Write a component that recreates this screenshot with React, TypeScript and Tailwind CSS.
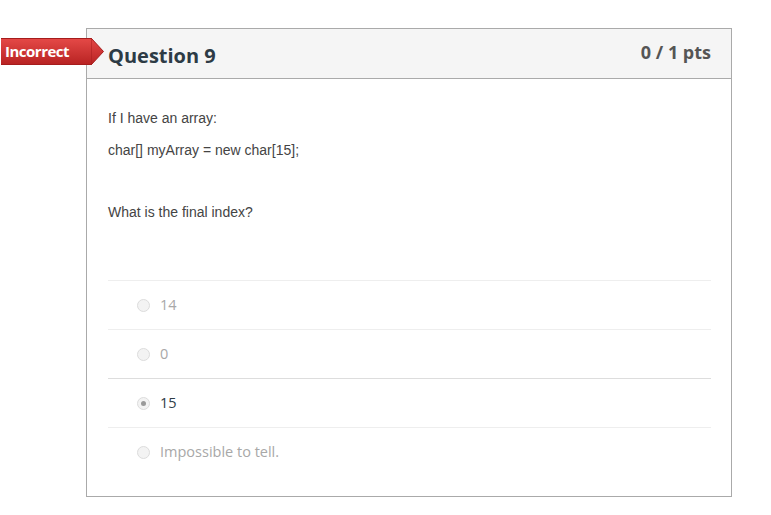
const answers = [
  { label: "14", selected: false },
  { label: "0", selected: false },
  { label: "15", selected: true },
  { label: "Impossible to tell.", selected: false },
];

function Radio({ checked }: { checked: boolean }) {
  return (
    <span className="flex h-[13px] w-[13px] items-center justify-center rounded-full border border-[#dcdcdc] bg-[#f3f3f3]">
      {checked ? <span className="h-[5px] w-[5px] rounded-full bg-[#9a9a9a]" /> : null}
    </span>
  );
}

function IncorrectBadge() {
  return (
    <div className="absolute left-[-86px] top-[9px] flex h-[27px] items-center">
      <div className="flex h-full w-[91px] items-center border-y border-[#a61c1c] bg-gradient-to-b from-[#e44846] to-[#b92323] pl-[4px] font-['Open_Sans',sans-serif] text-[15px] font-bold leading-none tracking-[-0.5px] text-white">
        Incorrect
      </div>
      <svg width="13" height="27" viewBox="0 0 13 27" aria-hidden="true" className="-ml-px">
        <defs>
          <linearGradient id="badge" x1="0" y1="0" x2="0" y2="1">
            <stop offset="0" stopColor="#e44846" />
            <stop offset="1" stopColor="#b92323" />
          </linearGradient>
        </defs>
        <path d="M0 0.5 L0.5 0.5 L12.5 13.5 L0.5 26.5 L0 26.5 Z" fill="url(#badge)" stroke="#a61c1c" strokeWidth="1" />
      </svg>
    </div>
  );
}

export default function App() {
  return (
    <div className="min-h-[515px] bg-white pt-[28px]">
      <div className="relative ml-[86px] w-[646px] border border-[#aaaaaa] bg-white">
        <IncorrectBadge />
        <header className="flex h-[50px] items-start justify-between border-b border-[#aaaaaa] bg-[#f5f5f5] pl-[21px] pr-[20px] font-['Open_Sans',sans-serif]">
          <h2 className="pt-[17px] text-[20px] font-bold leading-none text-[#2d3b45]">Question 9</h2>
          <span className="pt-[14px] text-[18px] font-bold leading-none text-[#555555]">0 / 1 pts</span>
        </header>

        <div className="pb-[20px] pl-[21px] pr-[20px] pt-[29px]">
          <div className="font-['Liberation_Sans',Arial,sans-serif] text-[14px] leading-[20px] text-[#444444]">
            <p>If I have an array:</p>
            <p className="mt-[12px]">char[] myArray = new char[15];</p>
            <p className="mt-[42px]">What is the final index?</p>
          </div>

          <div className="mt-[58px]">
            {answers.map((answer, i) => (
              <div
                key={answer.label}
                className={`flex h-[49px] items-center gap-[10px] border-t pl-[29px] font-['Open_Sans',sans-serif] text-[14.5px] ${
                  i === 2 ? "border-[#dddddd]" : "border-[#eeeeee]"
                }`}
              >
                <Radio checked={answer.selected} />
                <span className={answer.selected ? "text-[#2d3b45]" : "text-[#a8a8a8]"}>{answer.label}</span>
              </div>
            ))}
          </div>
        </div>
      </div>
    </div>
  );
}
